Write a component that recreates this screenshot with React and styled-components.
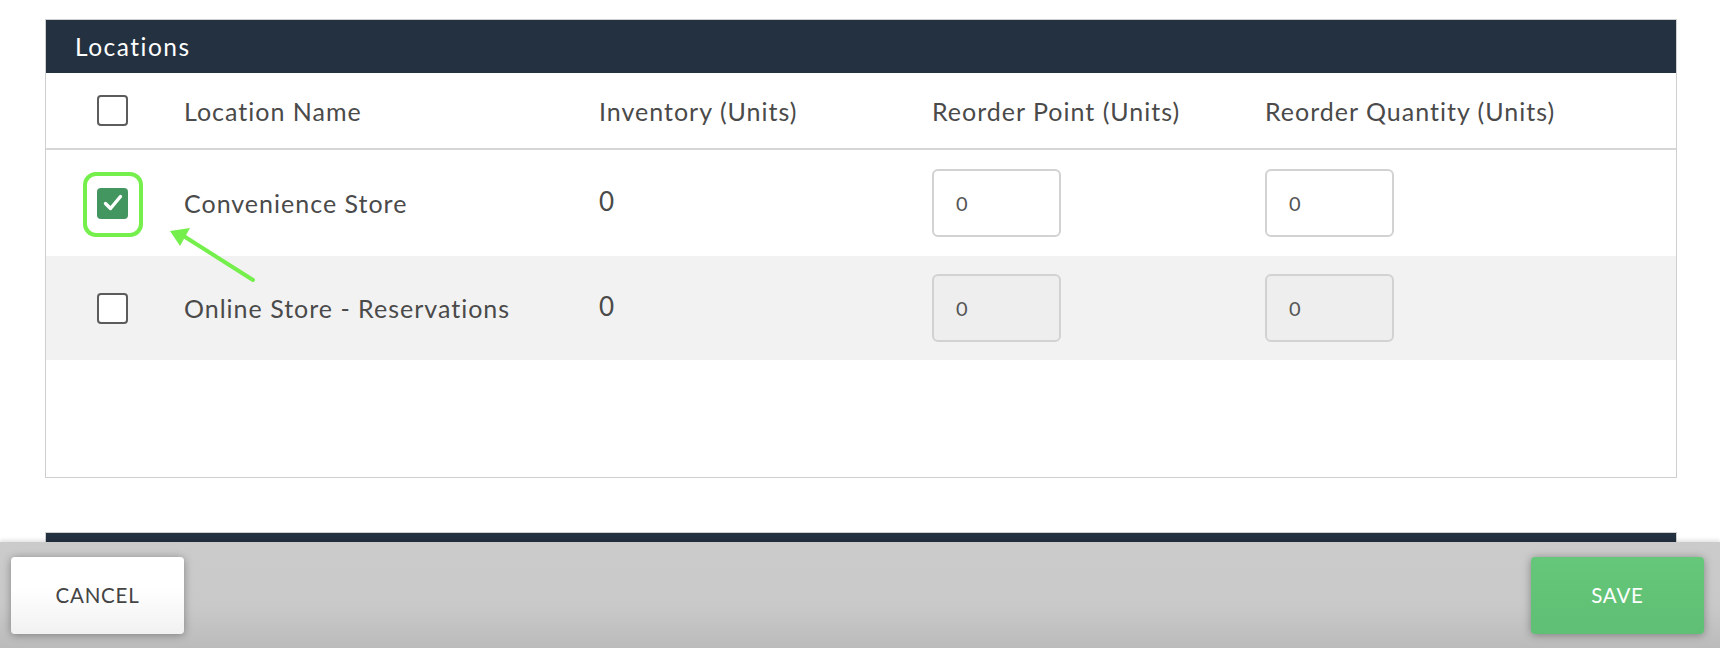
import React from 'react'
import styled, { createGlobalStyle } from 'styled-components'

const GlobalStyle = createGlobalStyle`
  html, body {
    margin: 0;
    padding: 0;
    background: #fff;
    font-family: Lato, "Open Sans", "Liberation Sans", sans-serif;
    color: #444;
  }
`

const Page = styled.div`
  position: relative;
  padding: 19px 43px 0 45px;
  height: 648px;
  box-sizing: border-box;
  overflow: hidden;
`

const Card = styled.section`
  border: 1px solid #cfcfcf;
  background: #fff;
  margin-bottom: 54px;
`

const CardHeader = styled.header`
  height: 53px;
  background: #243140;
  color: #fff;
  font-size: 24.5px;
  letter-spacing: 1.5px;
  display: flex;
  align-items: center;
  padding-left: 29px;
`

const Table = styled.div`
  min-height: ${p => p.minHeight || 0}px;
`

const Row = styled.div`
  display: grid;
  grid-template-columns: 138px 415px 333px 333px 1fr;
  align-items: center;
  height: ${p => p.height}px;
  background: ${p => (p.shaded ? '#f2f2f2' : '#fff')};
  border-bottom: ${p => (p.divider ? '2px solid #d6d6d6' : 'none')};
  box-sizing: border-box;
`

const Cell = styled.div`
  font-size: 25px;
  letter-spacing: 1px;
  color: #4a4a4a;
  white-space: nowrap;
`

const NumberCell = styled(Cell)`
  margin-top: -4px;
  font-size: 26px;
`

const CheckCell = styled.div`
  padding-left: 51px;
  display: flex;
  align-items: center;
`

const Box = styled.span`
  position: relative;
  width: 31px;
  height: 31px;
  box-sizing: border-box;
  border-radius: 4px;
  border: ${p => (p.checked ? 'none' : '2px solid #5c5c5c')};
  background: ${p => (p.checked ? '#43965f' : '#fff')};
  display: flex;
  align-items: center;
  justify-content: center;
`

const Highlight = styled.span`
  position: absolute;
  left: -14px;
  top: -16px;
  width: 60px;
  height: 65px;
  box-sizing: border-box;
  border: 4px solid #74ef4c;
  border-radius: 13px;
`

const Field = styled.div`
  width: 129px;
  height: 68px;
  box-sizing: border-box;
  border: 2px solid #d2d2d2;
  border-radius: 6px;
  background: ${p => (p.disabled ? '#eeeeee' : '#fff')};
  display: flex;
  align-items: center;
  padding-left: 22px;
  font-size: 20px;
  color: #555;
`

const Footer = styled.footer`
  position: absolute;
  left: 0;
  right: 0;
  bottom: 0;
  height: 106px;
  background: linear-gradient(#cbcbcb 0%, #c9c9c9 60%, #bbbbbb 100%);
  box-shadow: 0 -2px 4px rgba(0, 0, 0, 0.12);
  display: flex;
  align-items: center;
  justify-content: space-between;
  padding: 0 16px 0 11px;
`

const Button = styled.button`
  width: 173px;
  height: 77px;
  border: none;
  border-radius: 4px;
  font-family: inherit;
  font-size: 20.5px;
  letter-spacing: 0.8px;
  cursor: pointer;
  color: ${p => (p.primary ? '#fff' : '#444')};
  background: ${p =>
    p.primary
      ? 'linear-gradient(#65c77a, #5fbf74)'
      : 'linear-gradient(#ffffff 40%, #f1f1f1)'};
  box-shadow: 0 1px 8px rgba(0, 0, 0, 0.35);
`

const Arrow = styled.svg`
  position: absolute;
  left: 160px;
  top: 222px;
  overflow: visible;
`

const Check = () => (
  <svg width="20" height="18" viewBox="0 0 20 18">
    <path d="M2.5 9.5 L7.5 14.5 L17.5 2.5" fill="none" stroke="#fff" strokeWidth="3.4" strokeLinecap="round" strokeLinejoin="round" />
  </svg>
)

const Checkbox = ({ checked, highlighted }) => (
  <Box checked={checked}>
    {checked && <Check />}
    {highlighted && <Highlight />}
  </Box>
)

const locations = [
  { name: 'Convenience Store', inventory: 0, point: 0, quantity: 0, checked: true },
  { name: 'Online Store - Reservations', inventory: 0, point: 0, quantity: 0, checked: false }
]

const App = () => (
  <>
    <GlobalStyle />
    <Page>
      <Card>
        <CardHeader>Locations</CardHeader>
        <Table minHeight={404}>
          <Row height={77} divider>
            <CheckCell><Checkbox /></CheckCell>
            <Cell>Location Name</Cell>
            <Cell>Inventory (Units)</Cell>
            <Cell>Reorder Point (Units)</Cell>
            <Cell>Reorder Quantity (Units)</Cell>
          </Row>
          {locations.map((loc, i) => (
            <Row key={loc.name} height={i === 0 ? 106 : 104} shaded={i % 2 === 1}>
              <CheckCell><Checkbox checked={loc.checked} highlighted={loc.checked} /></CheckCell>
              <Cell>{loc.name}</Cell>
              <NumberCell>{loc.inventory}</NumberCell>
              <div><Field disabled={!loc.checked}>{loc.point}</Field></div>
              <div><Field disabled={!loc.checked}>{loc.quantity}</Field></div>
            </Row>
          ))}
        </Table>
      </Card>
      <Card>
        <CardHeader />
      </Card>
      <Arrow width="100" height="70" viewBox="0 0 100 70">
        <path d="M93 58 L22 13" stroke="#74ef4c" strokeWidth="4" strokeLinecap="round" />
        <path d="M10 9 L30 6 L20 24 Z" fill="#74ef4c" />
      </Arrow>
      <Footer>
        <Button>CANCEL</Button>
        <Button primary>SAVE</Button>
      </Footer>
    </Page>
  </>
)

export default App
